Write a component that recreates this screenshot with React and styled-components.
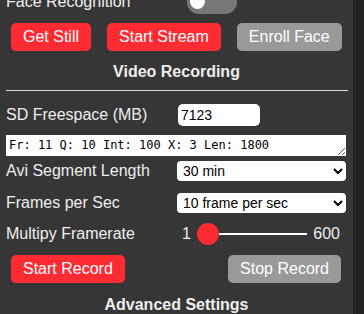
import React, {useState} from 'react';
import styled, {createGlobalStyle} from 'styled-components';

const GlobalStyle = createGlobalStyle`
  html, body {
    margin: 0;
    padding: 0;
    background-color: #222222;
    overflow: hidden;
  }
  body {
    font-family: "Liberation Sans", Arial, sans-serif;
  }
`;

const Page = styled.div`
  display: flex;
  flex-direction: row;
  height: 314px;
`;

const Panel = styled.div`
  width: 353px;
  background-color: #363636;
  color: #eeeeee;
  font-size: 16px;
  display: flex;
  flex-direction: column;
`;

const Row = styled.div`
  display: grid;
  grid-template-columns: 171px minmax(0, 1fr);
  align-items: center;
  padding: 0 7px 0 6px;
  height: ${props => props.h || 32}px;
  margin-top: ${props => props.mt || 0}px;
`;

const Label = styled.div`
  white-space: nowrap;
`;

const Toggle = styled.div`
  width: 50px;
  height: 24px;
  border-radius: 12px;
  background-color: #777777;
  margin-left: 10px;
  display: flex;
  align-items: center;
  padding-left: 3px;
  box-sizing: border-box;
`;

const Knob = styled.div`
  width: 15px;
  height: 15px;
  border-radius: 50%;
  background-color: #ffffff;
`;

const ButtonRow = styled.div`
  display: flex;
  justify-content: ${props => props.spread ? 'space-between' : 'flex-start'};
  gap: 16px;
  padding: 0 12px 0 11px;
  margin-top: ${props => props.mt || 0}px;
`;

const Button = styled.button`
  flex-shrink: 0;
  white-space: nowrap;
  min-width: 80px;
  height: 28px;
  padding: 0 12px;
  border: none;
  border-radius: 5px;
  background-color: ${props => props.grey ? '#999999' : '#ff2b33'};
  color: #ffffff;
  font-family: "Liberation Sans", Arial, sans-serif;
  font-size: 16px;
  cursor: pointer;
`;

const Heading = styled.div`
  font-weight: bold;
  text-align: center;
  margin-top: ${props => props.mt || 0}px;
  line-height: 18px;
`;

const Divider = styled.hr`
  margin: 9px 5px 0 6px;
  border: none;
  height: 2px;
  background-color: #dddddd;
`;

const NumberInput = styled.input`
  width: 82px;
  height: 22px;
  box-sizing: border-box;
  border: none;
  border-radius: 5px;
  padding: 0 3px;
  font-family: "Liberation Sans", Arial, sans-serif;
  font-size: 14px;
  color: #000;
  margin-left: 1px;
`;

const Info = styled.textarea`
  margin: 5px 7px 0 6px;
  height: 21px;
  box-sizing: border-box;
  border: none;
  padding: 3px 3px 2px;
  resize: vertical;
  font-family: "DejaVu Sans Mono", "Liberation Mono", monospace;
  font-size: 12px;
  line-height: 15px;
  color: #000;
  background-color: #ffffff;
  overflow: hidden;
`;

const Select = styled.select`
  height: 20px;
  box-sizing: border-box;
  border: none;
  border-radius: 4px;
  padding: 0 2px;
  font-family: "Liberation Sans", Arial, sans-serif;
  font-size: 14px;
  color: #000;
  background-color: #ffffff;
`;

const SliderWrap = styled.div`
  display: flex;
  align-items: center;
  gap: 6px;
  padding: 0 6px 0 5px;
`;

const Range = styled.input`
  -webkit-appearance: none;
  appearance: none;
  flex: 1 1 0;
  width: 0;
  min-width: 0;
  height: 2px;
  margin: 0;
  background: #ffffff;
  outline: none;

  &::-webkit-slider-thumb {
    -webkit-appearance: none;
    width: 22px;
    height: 22px;
    border-radius: 50%;
    background: #ff2b33;
    cursor: pointer;
  }
`;

const Small = styled.span`
  white-space: nowrap;
`;

const App = () => {
  const [mult, setMult] = useState(1);
  return (
    <Page>
      <GlobalStyle />
      <Panel>
        <Row h={28} mt={-12}>
          <Label>Face Recognition</Label>
          <Toggle><Knob /></Toggle>
        </Row>
        <ButtonRow mt={7}>
          <Button>Get Still</Button>
          <Button>Start Stream</Button>
          <Button grey>Enroll Face</Button>
        </ButtonRow>
        <Heading mt={12}>Video Recording</Heading>
        <Divider />
        <Row h={30} mt={9}>
          <Label>SD Freespace (MB)</Label>
          <NumberInput type="text" defaultValue="7123" />
        </Row>
        <Info defaultValue="Fr: 11 Q: 10 Int: 100 X: 3 Len: 1800" />
        <Row h={32} mt={0}>
          <Label>Avi Segment Length</Label>
          <Select defaultValue="30">
            <option value="30">30 min</option>
          </Select>
        </Row>
        <Row h={32}>
          <Label>Frames per Sec</Label>
          <Select defaultValue="10">
            <option value="10">10 frame per sec</option>
          </Select>
        </Row>
        <Row h={32}>
          <Label>Multipy Framerate</Label>
          <SliderWrap>
            <Small>1</Small>
            <Range type="range" min="1" max="600" value={mult} onChange={e => setMult(e.target.value)} />
            <Small>600</Small>
          </SliderWrap>
        </Row>
        <ButtonRow spread mt={5}>
          <Button>Start Record</Button>
          <Button grey>Stop Record</Button>
        </ButtonRow>
        <Heading mt={13}>Advanced Settings</Heading>
      </Panel>
    </Page>
  );
};

export default App;
